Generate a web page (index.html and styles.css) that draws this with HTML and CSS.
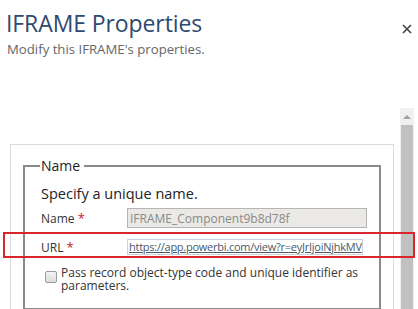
FILE: index.html
```html
<!DOCTYPE html>
<html lang="en">
<head>
    <meta charset="UTF-8">
    <title>IFRAME Properties</title>
    <link rel="stylesheet" href="styles.css">
</head>
<body>
    <div class="header">
        <div class="titles">
            <h1>IFRAME Properties</h1>
            <p class="subtitle">Modify this IFRAME's properties.</p>
        </div>
        <button class="close" title="Close">
            <svg width="10" height="10" viewBox="0 0 10 10"><path d="M1 1 L9 9 M9 1 L1 9" stroke="#444" stroke-width="1.6" fill="none"/></svg>
        </button>
    </div>
    <div class="scroll-area">
        <div class="content">
            <div class="panel">
                <fieldset class="group">
                    <legend>Name</legend>
                    <p class="hint">Specify a unique name.</p>
                    <div class="row">
                        <label class="field-label">Name <span class="req">*</span></label>
                        <input class="field name-field" type="text" value="IFRAME_Component9b8d78f" disabled>
                    </div>
                    <div class="row">
                        <label class="field-label">URL <span class="req">*</span></label>
                        <div class="field url-field">https://app.powerbi.com/view?r=eyJrIjoiNjhkMV</div>
                    </div>
                    <div class="check-row">
                        <span class="checkbox"></span>
                        <span class="check-text">Pass record object-type code and unique identifier as parameters.</span>
                    </div>
                </fieldset>
            </div>
        </div>
        <div class="scrollbar">
            <div class="arrow"></div>
            <div class="thumb"></div>
        </div>
    </div>
    <div class="highlight"></div>
</body>
</html>
```

FILE: styles.css
```css
body {
    font-family: "Open Sans", "Liberation Sans", sans-serif;
    background: white;
    margin: 0;
    width: 418px;
    height: 309px;
    overflow: hidden;
    position: relative;
}
.header {
    display: flex;
    justify-content: space-between;
    padding: 0 6px 0 6px;
    height: 108px;
}
h1 {
    margin: 8px 0 0 0;
    font-size: 23px;
    line-height: 30px;
    font-weight: normal;
    color: #2e4a6e;
    letter-spacing: -0.1px;
}
.subtitle {
    margin: 2px 0 0 1px;
    font-size: 13.2px;
    line-height: 18px;
    color: #666;
}
.close {
    border: none;
    background: none;
    padding: 0;
    margin: 22px 0 0 0;
    width: 10px;
    height: 10px;
    cursor: pointer;
}
.scroll-area {
    display: flex;
    height: 201px;
    overflow: hidden;
}
.content {
    flex: 1;
    padding: 36px 6px 0 10px;
}
.panel {
    border: 1px solid #dcdcdc;
    border-bottom: none;
    height: 152px;
    padding: 12px 12px 0 12px;
}
.group {
    margin: 0;
    border: 2px solid #8a8a8a;
    padding: 0 12px 16px 16px;
}
.group legend {
    font-size: 14px;
    line-height: 17px;
    color: #222;
    padding: 0 4px 0 1px;
    margin-left: -1px;
}
.hint {
    margin: 10px 0 4px 0;
    font-size: 14.5px;
    line-height: 20px;
    color: #222;
}
.row {
    display: flex;
    align-items: center;
    margin-bottom: 10px;
}
.field-label {
    width: 86px;
    font-size: 12px;
    color: #333;
}
.req {
    color: #c0202a;
    font-size: 13px;
}
.field {
    font-family: inherit;
    font-size: 12px;
    box-sizing: border-box;
    padding: 0 2px;
}
.name-field {
    width: 240px;
    height: 20px;
    border: 1px solid #b5b5b5;
    background: #ebe9e5;
    color: #8a8a8a;
}
.url-field {
    width: 236px;
    height: 16px;
    line-height: 14px;
    font-size: 11px;
    letter-spacing: -0.25px;
    padding: 0 1px;
    border: 1px solid #c9d2dc;
    color: #4a5868;
    text-decoration: underline;
    white-space: nowrap;
    overflow: hidden;
}
.check-row {
    display: flex;
    align-items: flex-start;
    margin: 8px 0 0 4px;
}
.checkbox {
    flex: none;
    width: 10px;
    height: 10px;
    border: 1px solid #9a9a9a;
    border-radius: 2px;
    background: linear-gradient(#f4f4f4, #dcdcdc);
    margin: 5px 4px 0 0;
}
.check-text {
    font-size: 12px;
    line-height: 13px;
    color: #333;
}
.scrollbar {
    width: 16px;
    margin-right: 4px;
    background: #f0f0f0;
    display: flex;
    flex-direction: column;
}
.arrow {
    height: 17px;
    display: flex;
    align-items: center;
    justify-content: center;
}
.arrow::before {
    content: "";
    border-left: 4px solid transparent;
    border-right: 4px solid transparent;
    border-bottom: 4px solid #a0a0a0;
}
.thumb {
    flex: 1;
    margin: 0 1px;
    background: #c1c1c1;
}
.highlight {
    position: absolute;
    left: 3px;
    top: 232px;
    width: 408px;
    height: 22px;
    border: 2px solid #d8262c;
}
```
